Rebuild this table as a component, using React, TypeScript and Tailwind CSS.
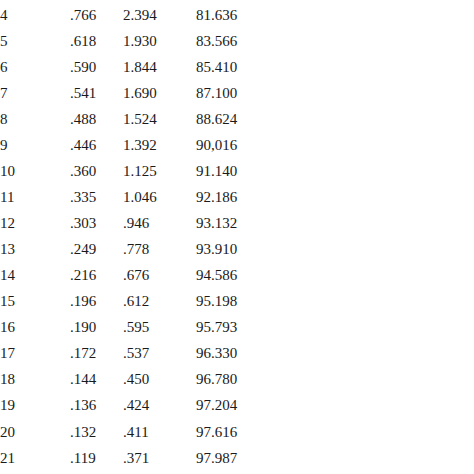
const rows: [string, string, string, string][] = [
  ["4", ".766", "2.394", "81.636"],
  ["5", ".618", "1.930", "83.566"],
  ["6", ".590", "1.844", "85.410"],
  ["7", ".541", "1.690", "87.100"],
  ["8", ".488", "1.524", "88.624"],
  ["9", ".446", "1.392", "90,016"],
  ["10", ".360", "1.125", "91.140"],
  ["11", ".335", "1.046", "92.186"],
  ["12", ".303", ".946", "93.132"],
  ["13", ".249", ".778", "93.910"],
  ["14", ".216", ".676", "94.586"],
  ["15", ".196", ".612", "95.198"],
  ["16", ".190", ".595", "95.793"],
  ["17", ".172", ".537", "96.330"],
  ["18", ".144", ".450", "96.780"],
  ["19", ".136", ".424", "97.204"],
  ["20", ".132", ".411", "97.616"],
  ["21", ".119", ".371", "97.987"],
]

const App = () => {
  return (
    <div className="h-[474px] w-[474px] overflow-hidden bg-white pt-[2px] font-['Liberation_Serif',serif] text-[15px] text-[#1a1a1a]">
      {rows.map((r) => (
        <div key={r[0]} className="grid h-[26.06px] grid-cols-[70px_53px_73px_1fr] items-center">
          <span>{r[0]}</span>
          <span>{r[1]}</span>
          <span>{r[2]}</span>
          <span>{r[3]}</span>
        </div>
      ))}
    </div>
  )
}

export default App
